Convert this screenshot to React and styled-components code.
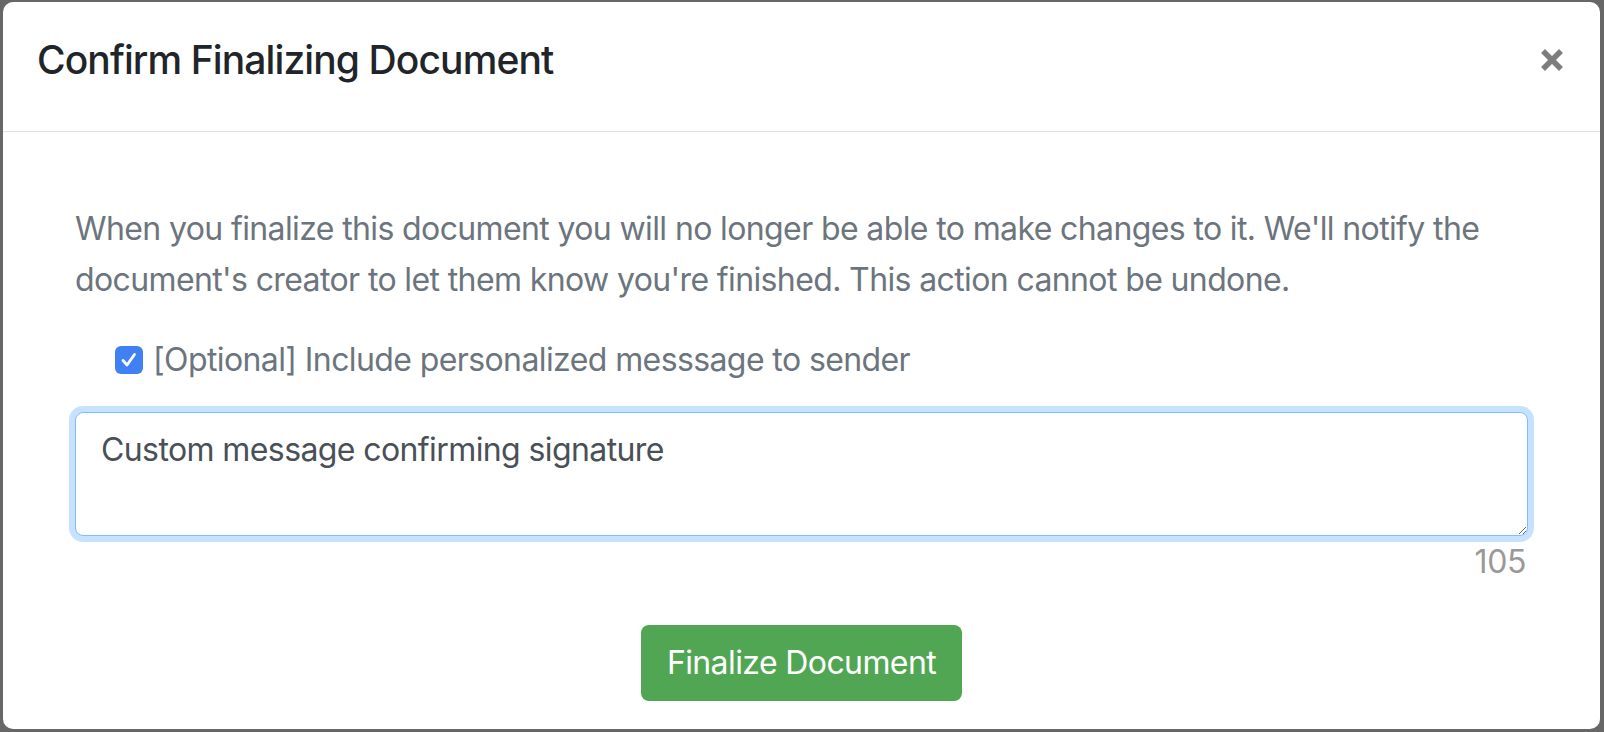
import React, { useState } from "react"
import styled, { createGlobalStyle } from "styled-components"

const GlobalStyle = createGlobalStyle`
  * {
    box-sizing: border-box;
  }
  body {
    margin: 0;
    background: #676767;
    font-family: Inter, "Noto Sans", "Liberation Sans", sans-serif;
  }
`

const Backdrop = styled.div`
  height: 732px;
  padding: 2px 4px 0 3px;
  overflow: hidden;
`

const Dialog = styled.div`
  height: 727px;
  background: #fff;
  border-radius: 10px;
  display: flex;
  flex-direction: column;
`

const Header = styled.div`
  flex-shrink: 0;
  height: 130px;
  padding: 26px 34px 0 34px;
  display: flex;
  justify-content: space-between;
  align-items: flex-start;
  border-bottom: 1px solid #dee2e6;
`

const Title = styled.h5`
  margin: 0;
  font-size: 39px;
  font-weight: 500;
  line-height: 64px;
  letter-spacing: -0.9px;
  color: #212529;
`

const CloseButton = styled.button`
  margin: 20px 2px 0 0;
  padding: 0;
  border: none;
  background: none;
  cursor: pointer;
  display: flex;
`

const Body = styled.div`
  padding: 71px 72px 0 72px;
  display: flex;
  flex-direction: column;
`

const Text = styled.p`
  margin: 0 0 29px 0;
  font-size: 32px;
  line-height: 51px;
  color: #6c757d;
  letter-spacing: -0.62px;
`

const CheckRow = styled.label`
  display: flex;
  align-items: center;
  gap: 10px;
  margin-left: 40px;
  font-size: 32px;
  line-height: 51px;
  color: #6c757d;
  letter-spacing: -0.6px;
  cursor: pointer;
`

const CheckBox = styled.span`
  width: 28px;
  height: 28px;
  border-radius: 6px;
  background: ${(p) => (p.checked ? "#3f80f2" : "#fff")};
  border: ${(p) => (p.checked ? "none" : "1px solid #999")};
  display: flex;
  align-items: center;
  justify-content: center;
  flex-shrink: 0;
`

const HiddenInput = styled.input`
  display: none;
`

const MessageBox = styled.textarea`
  margin-top: 27px;
  width: 100%;
  height: 124px;
  padding: 11px 25px;
  border: 1px solid #80bdff;
  border-radius: 8px;
  box-shadow: 0 0 0 6px rgba(0, 123, 255, 0.22);
  outline: none;
  font-family: inherit;
  font-size: 32px;
  line-height: 51px;
  letter-spacing: -0.6px;
  color: #495057;
  resize: vertical;
`

const Counter = styled.div`
  text-align: right;
  margin-right: 2px;
  font-size: 32px;
  line-height: 51px;
  letter-spacing: -0.4px;
  color: #999;
`

const Actions = styled.div`
  margin-top: 38px;
  display: flex;
  justify-content: center;
`

const FinalizeButton = styled.button`
  background: #51a653;
  color: #fff;
  border: none;
  border-radius: 8px;
  padding: 12px 26px 13px;
  font-family: inherit;
  font-size: 32px;
  line-height: 51px;
  letter-spacing: -0.6px;
  cursor: pointer;
`

const CloseIcon = () => (
  <svg width="24" height="24" viewBox="0 0 24 24">
    <path d="M3 3 L21 21 M21 3 L3 21" stroke="#7d7d7d" strokeWidth="5.5" />
  </svg>
)

const CheckIcon = () => (
  <svg width="22" height="22" viewBox="0 0 22 22">
    <path
      d="M5 11.5 L9 16 L16.5 5.5"
      fill="none"
      stroke="#fff"
      strokeWidth="2.8"
      strokeLinecap="round"
      strokeLinejoin="round"
    />
  </svg>
)

const App = () => {
  const [includeMessage, setIncludeMessage] = useState(true)
  const [message, setMessage] = useState("Custom message confirming signature")

  return (
    <>
      <GlobalStyle />
      <Backdrop>
        <Dialog>
          <Header>
            <Title>Confirm Finalizing Document</Title>
            <CloseButton aria-label="Close">
              <CloseIcon />
            </CloseButton>
          </Header>
          <Body>
            <Text>
              When you finalize this document you will no longer be able to make
              changes to it. We'll notify the document's creator to let them know
              you're finished. This action cannot be undone.
            </Text>
            <CheckRow>
              <HiddenInput
                type="checkbox"
                checked={includeMessage}
                onChange={(e) => setIncludeMessage(e.target.checked)}
              />
              <CheckBox checked={includeMessage}>
                {includeMessage && <CheckIcon />}
              </CheckBox>
              [Optional] Include personalized messsage to sender
            </CheckRow>
            <MessageBox
              value={message}
              onChange={(e) => setMessage(e.target.value)}
            />
            <Counter>{140 - message.length}</Counter>
            <Actions>
              <FinalizeButton>Finalize Document</FinalizeButton>
            </Actions>
          </Body>
        </Dialog>
      </Backdrop>
    </>
  )
}

export default App
